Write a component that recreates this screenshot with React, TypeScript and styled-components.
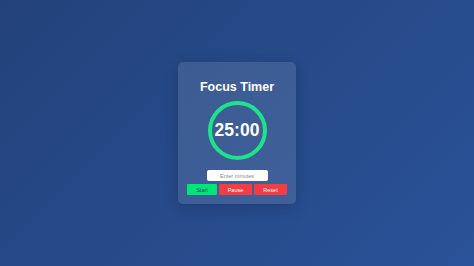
import styled, { createGlobalStyle } from "styled-components"

const Global = createGlobalStyle`
  html, body {
    margin: 0;
    padding: 0;
    height: 100%;
  }
  #root {
    height: 100%;
  }
  * {
    box-sizing: border-box;
  }
`

const Page = styled.div`
  height: 100vh;
  display: flex;
  justify-content: center;
  align-items: center;
  background: linear-gradient(135deg, #23427b, #2a5298);
  font-family: "Liberation Sans", Arial, sans-serif;
`

const Card = styled.div`
  width: 118px;
  height: 142px;
  padding: 17px 9px 9px;
  border-radius: 5px;
  background: rgba(255, 255, 255, 0.11);
  box-shadow: 0 4px 14px rgba(0, 0, 0, 0.18);
  display: flex;
  flex-direction: column;
  align-items: center;
`

const Title = styled.h1`
  margin: 0;
  font-size: 12.5px;
  line-height: 16px;
  font-weight: bold;
  color: #ffffff;
`

const Ring = styled.div`
  margin-top: 6px;
  width: 59px;
  height: 59px;
  border-radius: 50%;
  border: 4px solid #1de38a;
  display: flex;
  justify-content: center;
  align-items: center;
`

const Time = styled.span`
  font-size: 17.5px;
  font-weight: bold;
  color: #ffffff;
`

const MinutesInput = styled.input`
  margin-top: 10px;
  width: 61px;
  height: 11px;
  padding: 0;
  border: none;
  border-radius: 2px;
  background: #ffffff;
  font-family: inherit;
  font-size: 5.5px;
  text-align: center;
  outline: none;

  &::placeholder {
    color: #8a8a8a;
  }
`

const Controls = styled.div`
  margin-top: 3px;
  display: flex;
  gap: 2px;
`

const Button = styled.button<{ $tone: "go" | "stop"; $w: number }>`
  width: ${(p) => p.$w}px;
  height: 11px;
  padding: 0;
  border: none;
  border-radius: 1px;
  font-family: inherit;
  font-size: 5.5px;
  background: ${(p) => (p.$tone === "go" ? "#00e676" : "#f43c45")};
  color: ${(p) => (p.$tone === "go" ? "#1e3c72" : "#ffffff")};
`

export default function App() {
  return (
    <>
      <Global />
      <Page>
        <Card>
          <Title>Focus Timer</Title>
          <Ring>
            <Time>25:00</Time>
          </Ring>
          <MinutesInput placeholder="Enter minutes" />
          <Controls>
            <Button $tone="go" $w={30}>Start</Button>
            <Button $tone="stop" $w={33}>Pause</Button>
            <Button $tone="stop" $w={33}>Reset</Button>
          </Controls>
        </Card>
      </Page>
    </>
  )
}
